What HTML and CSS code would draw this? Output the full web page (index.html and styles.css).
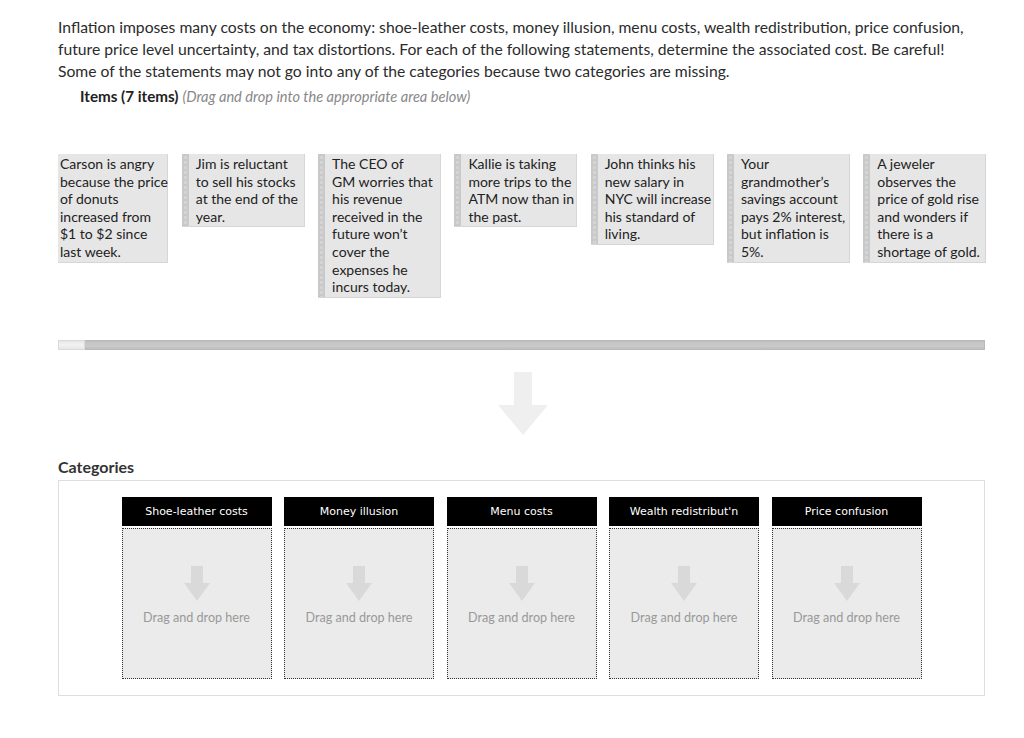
FILE: index.html
```html
<!DOCTYPE html>
<html lang="en">
<head>
<meta charset="utf-8">
<title>Costs of Inflation</title>
<link rel="stylesheet" href="styles.css">
</head>
<body>
<div class="page">
  <p class="intro">Inflation imposes many costs on the economy: shoe-leather costs, money illusion, menu costs, wealth redistribution, price confusion, future price level uncertainty, and tax distortions. For each of the following statements, determine the associated cost. Be careful! Some of the statements may not go into any of the categories because two categories are missing.</p>
  <div class="items-title"><strong>Items (7 items)</strong> <em>(Drag and drop into the appropriate area below)</em></div>

  <div class="items">
    <div class="card first"><div class="card-text">Carson is angry because the price of donuts increased from $1 to $2 since last week.</div></div>
    <div class="card"><span class="grip"></span><div class="card-text">Jim is reluctant to sell his stocks at the end of the year.</div></div>
    <div class="card"><span class="grip"></span><div class="card-text">The CEO of<br>GM worries that his revenue received in the future won’t cover the expenses he incurs today.</div></div>
    <div class="card"><span class="grip"></span><div class="card-text">Kallie is taking more trips to the ATM now than in the past.</div></div>
    <div class="card"><span class="grip"></span><div class="card-text">John thinks his new salary in NYC will increase his standard of living.</div></div>
    <div class="card"><span class="grip"></span><div class="card-text">Your grandmother’s savings account pays 2% interest, but inflation is 5%.</div></div>
    <div class="card"><span class="grip"></span><div class="card-text">A jeweler observes the price of gold rise and wonders if there is a shortage of gold.</div></div>
  </div>

  <div class="scrollbar"><div class="thumb"></div></div>

  <div class="big-arrow">
    <svg width="50" height="63" viewBox="0 0 50 63"><path d="M16 0H34V33H50L25 63L0 33H16Z" fill="#efefef"/></svg>
  </div>

  <div class="cat-title">Categories</div>
  <div class="categories">
    <div class="category">
      <div class="cat-head">Shoe-leather costs</div>
      <div class="drop"><svg class="drop-arrow" width="26" height="35" viewBox="0 0 26 35"><path d="M7 0H19V17H26L13 35L0 17H7Z" fill="#d9d9d9"/></svg><span class="drop-text">Drag and drop here</span></div>
    </div>
    <div class="category">
      <div class="cat-head">Money illusion</div>
      <div class="drop"><svg class="drop-arrow" width="26" height="35" viewBox="0 0 26 35"><path d="M7 0H19V17H26L13 35L0 17H7Z" fill="#d9d9d9"/></svg><span class="drop-text">Drag and drop here</span></div>
    </div>
    <div class="category">
      <div class="cat-head">Menu costs</div>
      <div class="drop"><svg class="drop-arrow" width="26" height="35" viewBox="0 0 26 35"><path d="M7 0H19V17H26L13 35L0 17H7Z" fill="#d9d9d9"/></svg><span class="drop-text">Drag and drop here</span></div>
    </div>
    <div class="category">
      <div class="cat-head">Wealth redistribut'n</div>
      <div class="drop"><svg class="drop-arrow" width="26" height="35" viewBox="0 0 26 35"><path d="M7 0H19V17H26L13 35L0 17H7Z" fill="#d9d9d9"/></svg><span class="drop-text">Drag and drop here</span></div>
    </div>
    <div class="category">
      <div class="cat-head">Price confusion</div>
      <div class="drop"><svg class="drop-arrow" width="26" height="35" viewBox="0 0 26 35"><path d="M7 0H19V17H26L13 35L0 17H7Z" fill="#d9d9d9"/></svg><span class="drop-text">Drag and drop here</span></div>
    </div>
  </div>
</div>
</body>
</html>
```

FILE: styles.css
```css
html, body {
  margin: 0;
  padding: 0;
  background: #fff;
}

body {
  font-family: Lato, "Open Sans", sans-serif;
  color: #333;
}

.page {
  width: 927px;
  padding: 16px 0 40px 58px;
}

.intro {
  max-width: 912px;
  margin: 0;
  font-size: 15.7px;
  line-height: 22px;
  color: #2b2b2b;
}

.items-title {
  margin: 4px 0 0 22px;
  font-size: 15.2px;
  line-height: 20px;
}

.items-title strong {
  font-weight: 700;
  color: #222;
}

.items-title em {
  font-size: 14.6px;
  color: #888;
}

/* draggable statements */
.items {
  display: flex;
  align-items: flex-start;
  gap: 13.3px;
  margin-top: 47px;
}

.card {
  display: flex;
  width: 123px;
  flex: none;
  background: #e6e6e6;
  border-right: 1px solid #d6d6d6;
  border-bottom: 1px solid #d6d6d6;
  box-sizing: border-box;
}

.card.first {
  width: 110px;
  margin-right: 0.5px;
}

.grip {
  flex: none;
  width: 7px;
  background-color: #c9c9c9;
  background-image: repeating-linear-gradient(to bottom, #c9c9c9 0, #c9c9c9 2px, #d4d4d4 2px, #d4d4d4 5px);
  background-size: 3px 100%;
  background-repeat: no-repeat;
  background-position: 2px 0;
}

.card-text {
  padding: 1px 0 1px 7px;
  font-size: 14px;
  line-height: 17.6px;
  color: #222;
}

.card.first .card-text {
  padding-left: 2px;
  margin-right: -3px;
}

/* horizontal scroller under the items */
.scrollbar {
  display: flex;
  height: 10px;
  margin-top: 42px;
  background: linear-gradient(to bottom, #b5b5b5 0, #c6c6c6 25%, #c9c9c9 60%, #bababa 100%);
  box-shadow: inset 0 0 0 1px #b9b9b9;
}

.thumb {
  width: 27px;
  background: linear-gradient(to bottom, #e2e2e2, #f3f3f3 50%, #e2e2e2);
  box-shadow: inset 0 0 0 1px #dadada;
}

.big-arrow {
  display: flex;
  justify-content: center;
  margin-top: 22px;
  padding-left: 3px;
}

.big-arrow svg {
  display: block;
}

.cat-title {
  margin-top: 22px;
  font-size: 16px;
  line-height: 20px;
  font-weight: 700;
  color: #333;
}

.categories {
  display: flex;
  justify-content: center;
  gap: 12.5px;
  margin-top: 3px;
  padding: 16px 0 16px;
  border: 1px solid #dedede;
}

.category {
  width: 150px;
}

.cat-head {
  height: 29px;
  margin-bottom: 2px;
  background: #000;
  color: #fff;
  font-family: "DejaVu Sans", Verdana, sans-serif;
  font-size: 11px;
  line-height: 29px;
  text-align: center;
}

.drop {
  display: flex;
  flex-direction: column;
  align-items: center;
  height: 151px;
  box-sizing: border-box;
  padding-top: 37px;
  background: #ebebeb;
  border: 1px dotted #333;
}

.drop-arrow {
  display: block;
}

.drop-text {
  margin-top: 9px;
  font-size: 12.6px;
  line-height: 16px;
  color: #999;
}
```
